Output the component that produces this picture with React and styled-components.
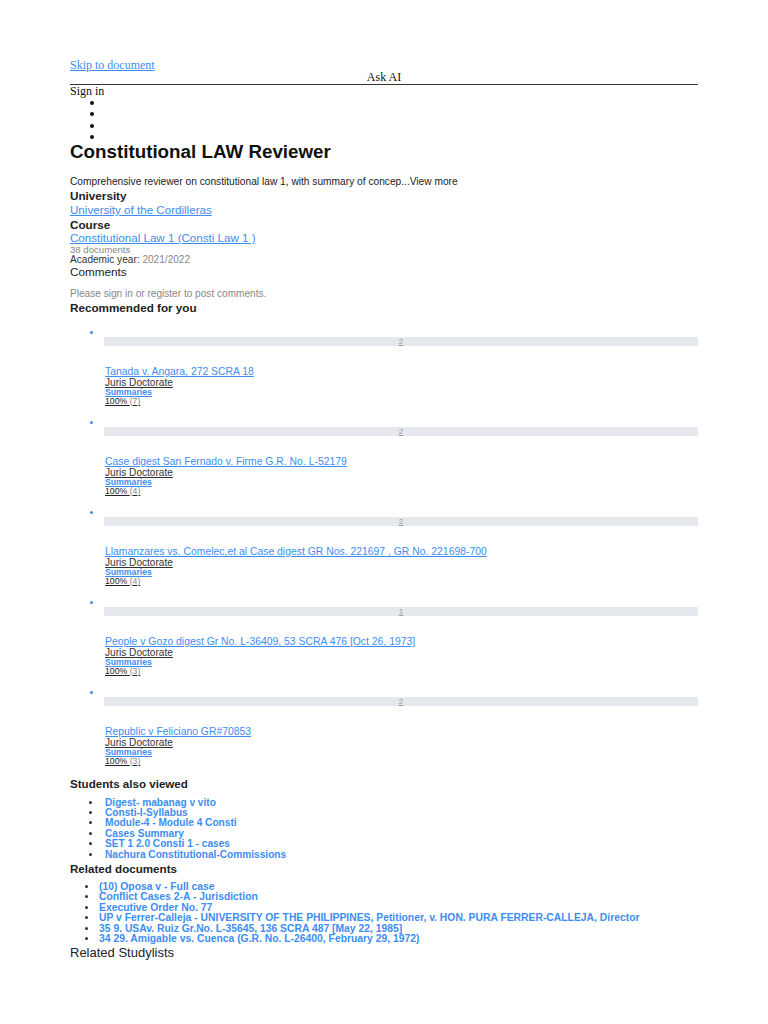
import React from "react";
import styled, { createGlobalStyle } from "styled-components";

const Global = createGlobalStyle`
  html, body { margin: 0; padding: 0; background: #fff; }
  body { font-family: "Liberation Serif", "Times New Roman", serif; color: #111; }
`;

const LINK = "#3d8df2";

const Page = styled.div`
  width: 628px;
  margin-left: 70px;
  padding-top: 59px;
`;

const SkipLink = styled.a`
  display: block;
  font-family: "Liberation Serif", serif;
  font-size: 12px;
  line-height: 13px;
  color: ${LINK};
  text-decoration: underline;
  width: max-content;
`;

const TopBar = styled.div`
  text-align: center;
  font-family: "Liberation Serif", serif;
  font-size: 12px;
  line-height: 11px;
  padding-bottom: 1px;
  border-bottom: 1.5px solid #333;
`;

const SignIn = styled.div`
  font-family: "Liberation Serif", serif;
  font-size: 12px;
  line-height: 12px;
`;

const EmptyList = styled.ul`
  margin: 0;
  padding: 0 0 0 20px;
  list-style: none;
`;

const EmptyItem = styled.li`
  height: 11.5px;
  display: flex;
  align-items: center;
  &::before {
    content: "";
    width: 4px;
    height: 4px;
    border-radius: 50%;
    background: #111;
  }
`;

const Sans = styled.div`
  font-family: "Liberation Sans", Arial, sans-serif;
`;

const Title = styled.h1`
  margin: -1px 0 0;
  font-family: "Liberation Sans", Arial, sans-serif;
  font-size: 18.8px;
  line-height: 20px;
  font-weight: 700;
  color: #111;
`;

const Description = styled.p`
  margin: 14px 0 0;
  font-size: 10.2px;
  line-height: 12px;
  color: #222;
`;

const Label = styled.div`
  margin-top: ${(p) => p.$mt || 0}px;
  font-size: 11.7px;
  line-height: 14px;
  font-weight: ${(p) => (p.$bold ? 700 : 400)};
  color: #222;
`;

const MetaLink = styled.a`
  display: block;
  width: max-content;
  font-size: 11.6px;
  line-height: ${(p) => p.$lh || 14}px;
  color: ${LINK};
  text-decoration: underline;
`;

const Small = styled.div`
  font-size: ${(p) => p.$size || 10.1}px;
  line-height: 10px;
  color: ${(p) => (p.$muted ? "#888" : "#333")};
  margin-top: ${(p) => p.$mt || 0}px;
`;

const Muted = styled.span`
  color: #888;
`;

const RecList = styled.ul`
  margin: 12px 0 0;
  padding: 0 0 0 20px;
  list-style: none;
`;

const RecItem = styled.li`
  height: 90px;
  display: flex;
  flex-direction: column;
`;

const DotRow = styled.div`
  height: 10px;
  display: flex;
  align-items: center;
  &::before {
    content: "";
    width: 3px;
    height: 3px;
    border-radius: 50%;
    background: ${LINK};
  }
`;

const Body = styled.div`
  padding-left: 14px;
  display: flex;
  flex-direction: column;
  align-items: flex-start;
`;

const Thumb = styled.div`
  align-self: stretch;
  margin-top: 0;
  height: 9px;
  background: #e5e8ec;
  display: flex;
  justify-content: center;
  align-items: center;
  font-size: 8px;
  color: #9a9a9a;
  text-decoration: underline;
`;

const DocLink = styled.a`
  margin: 21px 0 0 1px;
  font-size: 10.4px;
  line-height: 10px;
  color: ${LINK};
  text-decoration: underline;
`;

const Uni = styled.a`
  margin-left: 1px;
  font-size: 10.1px;
  line-height: 11px;
  color: #333;
  text-decoration: underline;
`;

const Tag = styled.a`
  margin-left: 1px;
  font-size: 8.7px;
  line-height: 9px;
  font-weight: 700;
  color: ${LINK};
  text-decoration: underline;
`;

const Rating = styled.a`
  margin-left: 1px;
  font-size: 8.7px;
  line-height: 9px;
  color: #222;
  text-decoration: underline;
`;

const SectionHead = styled.div`
  line-height: 14px;
  font-weight: ${(p) => (p.$bold ? 700 : 400)};
  font-size: ${(p) => (p.$bold ? 11.6 : 13)}px;
  color: #222;
  margin-top: ${(p) => p.$mt || 0}px;
`;

const LinkList = styled.ul`
  margin: ${(p) => p.$mt}px 0 0;
  padding: 0 0 0 ${(p) => p.$pad}px;
  list-style: none;
`;

const LinkItem = styled.li`
  height: 10.4px;
  display: flex;
  align-items: center;
  gap: ${(p) => p.$gap}px;
  font-size: ${(p) => p.$size}px;
  font-weight: 700;
  &::before {
    content: "";
    width: 3px;
    height: 3px;
    border-radius: 50%;
    background: #333;
    flex: none;
  }
  a {
    color: ${LINK};
    text-decoration: none;
    white-space: nowrap;
  }
`;

const recs = [
  { n: 2, t: "Tanada v. Angara, 272 SCRA 18", r: 7 },
  { n: 2, t: "Case digest San Fernado v. Firme G.R. No. L-52179", r: 4 },
  { n: 2, t: "Llamanzares vs. Comelec,et al Case digest GR Nos. 221697 , GR No. 221698-700", r: 4 },
  { n: 1, t: "People v Gozo digest Gr No. L-36409, 53 SCRA 476 [Oct 26, 1973]", r: 3 },
  { n: 2, t: "Republic v Feliciano GR#70853", r: 3 },
];

const viewed = [
  "Digest- mabanag v vito",
  "Consti-I-Syllabus",
  "Module-4 - Module 4 Consti",
  "Cases Summary",
  "SET 1 2.0 Consti 1 - cases",
  "Nachura Constitutional-Commissions",
];

const related = [
  "(10) Oposa v - Full case",
  "Conflict Cases 2-A - Jurisdiction",
  "Executive Order No. 77",
  "UP v Ferrer-Calleja - UNIVERSITY OF THE PHILIPPINES, Petitioner, v. HON. PURA FERRER-CALLEJA, Director",
  "35 9. USAv. Ruiz Gr.No. L-35645, 136 SCRA 487 [May 22, 1985]",
  "34 29. Amigable vs. Cuenca (G.R. No. L-26400, February 29, 1972)",
];

export default function App() {
  return (
    <>
      <Global />
      <Page>
        <SkipLink href="#">Skip to document</SkipLink>
        <TopBar>Ask AI</TopBar>
        <SignIn>Sign in</SignIn>
        <EmptyList>
          <EmptyItem />
          <EmptyItem />
          <EmptyItem />
          <EmptyItem />
        </EmptyList>
        <Sans>
          <Title>Constitutional LAW Reviewer</Title>
          <Description>
            Comprehensive reviewer on constitutional law 1, with summary of concep...View more
          </Description>
          <Label $bold $mt={1}>University</Label>
          <MetaLink href="#">University of the Cordilleras</MetaLink>
          <Label $bold $mt={1}>Course</Label>
          <MetaLink href="#" $lh={12}>Constitutional Law 1 (Consti Law 1 )</MetaLink>
          <Small $muted $size={9.6} $mt={1}>38 documents</Small>
          <Small>
            Academic year: <Muted>2021/2022</Muted>
          </Small>
          <Label $mt={0}>Comments</Label>
          <Small $muted $mt={10}>Please sign in or register to post comments.</Small>
          <Label $bold $mt={2}>Recommended for you</Label>
          <RecList>
            {recs.map((r, i) => (
              <RecItem key={i}>
                <DotRow />
                <Body>
                  <Thumb>{r.n}</Thumb>
                  <DocLink href="#">{r.t}</DocLink>
                  <Uni href="#">Juris Doctorate</Uni>
                  <Tag href="#">Summaries</Tag>
                  <Rating href="#">
                    100% <Muted>({r.r})</Muted>
                  </Rating>
                </Body>
              </RecItem>
            ))}
          </RecList>
          <SectionHead $bold>Students also viewed</SectionHead>
          <LinkList $mt={6} $pad={19}>
            {viewed.map((v) => (
              <LinkItem key={v} $gap={13} $size={10.15}>
                <a href="#">{v}</a>
              </LinkItem>
            ))}
          </LinkList>
          <SectionHead $bold $mt={3}>Related documents</SectionHead>
          <LinkList $mt={5} $pad={15}>
            {related.map((v) => (
              <LinkItem key={v} $gap={11} $size={10.35}>
                <a href="#">{v}</a>
              </LinkItem>
            ))}
          </LinkList>
          <SectionHead $mt={2}>Related Studylists</SectionHead>
        </Sans>
      </Page>
    </>
  );
}
